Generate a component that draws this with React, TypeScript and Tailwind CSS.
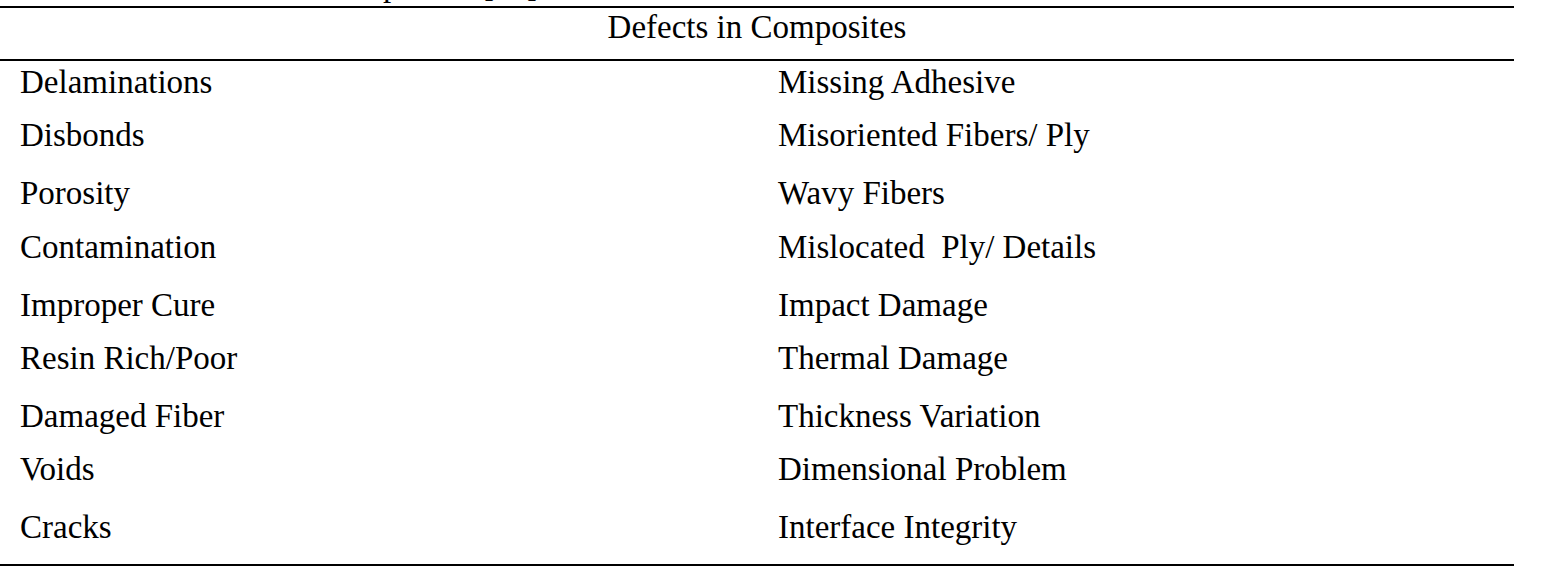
const rows: [string, string, string][] = [
  ["Delaminations", "Missing Adhesive", "h-[53px]"],
  ["Disbonds", "Misoriented Fibers/ Ply", "h-[58px]"],
  ["Porosity", "Wavy Fibers", "h-[54px]"],
  ["Contamination", "Mislocated  Ply/ Details", "h-[58px]"],
  ["Improper Cure", "Impact Damage", "h-[53px]"],
  ["Resin Rich/Poor", "Thermal Damage", "h-[58px]"],
  ["Damaged Fiber", "Thickness Variation", "h-[53px]"],
  ["Voids", "Dimensional Problem", "h-[58px]"],
  ["Cracks", "Interface Integrity", "h-[58px]"],
];

export default function App() {
  return (
    <div className="w-[1546px] h-[569px] bg-white text-black font-['Liberation_Serif','Times_New_Roman',serif] text-[33px] leading-[36px] overflow-hidden">
      {/* caption, mostly cut off above the frame */}
      <div className="w-[538px] h-[6px] overflow-hidden flex justify-end">
        <div className="-mt-[33px] whitespace-nowrap">Table 1. Defects in composites [12]</div>
      </div>

      <div className="w-[1514px] border-t-2 border-b-2 border-black">
        {/* Header */}
        <div className="h-[53px] pt-[1px] border-b-2 border-black text-center">
          Defects in Composites
        </div>

        {/* Body */}
        {rows.map(([left, right, h], i) => (
          <div key={i} className={`${h} grid grid-cols-[778px_1fr] pt-[3px]`}>
            <div className="pl-[20px] whitespace-pre">{left}</div>
            <div className="whitespace-pre">{right}</div>
          </div>
        ))}
      </div>
    </div>
  );
}
